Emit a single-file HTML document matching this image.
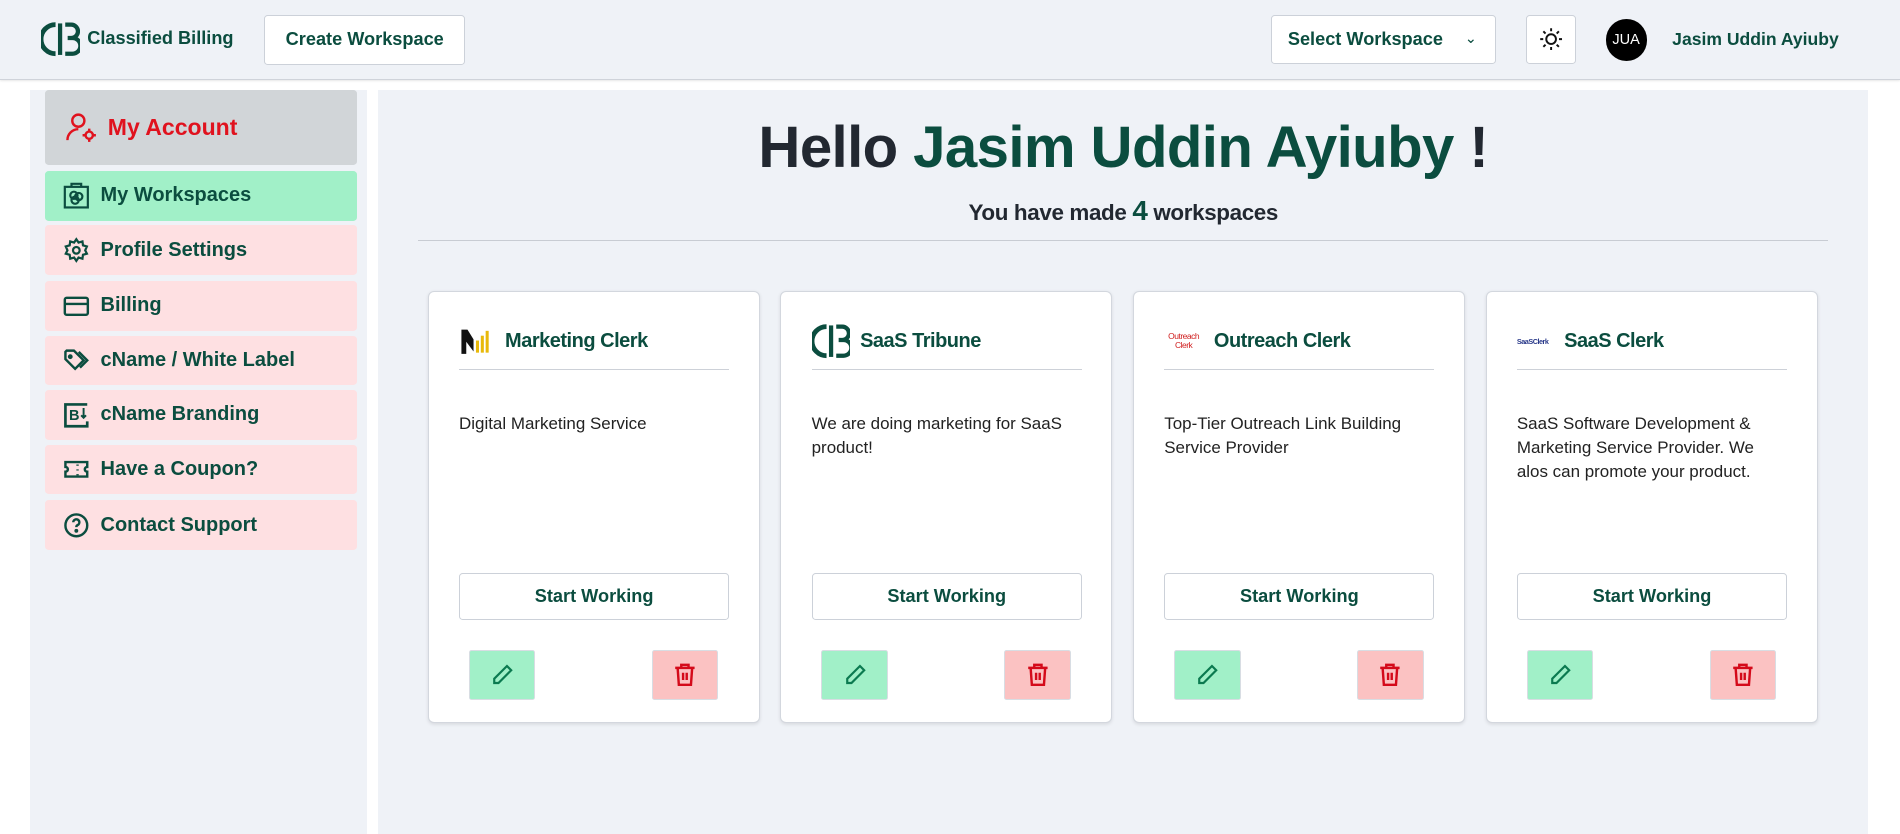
<!DOCTYPE html>
<html><head><meta charset="utf-8"><style>
*{box-sizing:border-box;margin:0;padding:0}
html,body{width:1900px;height:834px;overflow:hidden;background:#fff}
#root{zoom:1.21173;width:1568px;height:688px;position:relative;font-family:"Liberation Sans",Arial,sans-serif;color:#0b4d3f}
.abs{position:absolute}
.hdr{left:0;top:0;width:1568px;height:66px;background:#eff2f7;border-bottom:1px solid #cfd3da;box-shadow:0 1px 2px rgba(0,0,0,.12)}
.btn{background:#fff;border:1px solid #ccd1d9;border-radius:3px;font-weight:bold;display:flex;align-items:center;justify-content:center;color:#0b4d3f}
.side{left:25px;top:74px;width:278px;height:614px;background:#eff2f7}
.item{position:absolute;left:12px;width:258px;height:41px;border-radius:3px;background:#fee0e2;display:flex;align-items:center;padding-left:15px;font-weight:bold;font-size:16.5px;color:#0b4d3f}
.item svg{margin-right:9px}
.main{left:312px;top:74px;width:1230px;height:614px;background:#eff2f7}
.card{position:absolute;top:240px;width:274px;height:357px;background:#fff;border:1px solid #d3d7de;border-radius:5px;box-shadow:0 1px 3px rgba(0,0,0,.1)}
.card .t{position:absolute;left:25px;top:28px;height:26px;display:flex;align-items:center;font-weight:bold;font-size:16.5px;letter-spacing:-.4px}
.card .hr{position:absolute;left:25px;width:223px;top:64px;border-top:1px solid #cdd1d8}
.card .d{position:absolute;left:25px;top:99px;width:222px;font-size:14px;line-height:20px;color:#222}
.card .sw{position:absolute;left:25px;top:232px;width:223px;height:39px;font-size:15px}
.card .e,.card .x{position:absolute;top:296px;width:55px;height:41px;border-radius:2px;border:1px solid #d8dde3;display:flex;align-items:center;justify-content:center}
.card .e{left:33px;background:#a1f0c8}
.card .x{left:184px;background:#fbc2c2}
</style></head><body><div id="root">
<div class="abs hdr"></div>
<svg class="abs" style="left:34px;top:17px" width="32" height="30" viewBox="0 0 32 30"><path d="M12 3A12 12 0 0 0 12 27" fill="none" stroke="#0b4d3f" stroke-width="4"/><rect x="14" y="2" width="3.5" height="26" fill="#0b4d3f"/><path d="M20 3h5a5.5 5.5 0 0 1 0 11h-3M22 14h4a6.5 6.5 0 0 1 0 13h-6" fill="none" stroke="#0b4d3f" stroke-width="3.5"/></svg>
<div class="abs" style="left:72px;top:23px;font-weight:bold;font-size:15px">Classified Billing</div>
<div class="abs btn" style="left:218px;top:12px;width:166px;height:42px;font-size:15px">Create Workspace</div>
<div class="abs btn" style="left:1049px;top:12px;width:186px;height:41px;font-size:15px;justify-content:flex-start;padding-left:13px">Select Workspace<span style="margin-left:18px;font-weight:normal;font-size:12px;color:#0b4d3f">&#8964;</span></div>
<div class="abs btn" style="left:1259px;top:12px;width:42px;height:41px"><svg width="20" height="20" viewBox="0 0 20 20" stroke="#111" stroke-width="1.6" fill="none"><circle cx="10" cy="10" r="4"/><path d="M10 1v2.5M10 16.5V19M1 10h2.5M16.5 10H19M3.6 3.6l1.8 1.8M14.6 14.6l1.8 1.8M3.6 16.4l1.8-1.8M14.6 5.4l1.8-1.8"/></svg></div>
<div class="abs" style="left:1325px;top:16px;width:34px;height:34px;border-radius:50%;background:#000;color:#fff;font-size:12px;display:flex;align-items:center;justify-content:center">JUA</div>
<div class="abs" style="left:1380px;top:24px;font-weight:bold;font-size:14.5px">Jasim Uddin Ayiuby</div>

<div class="abs side">
<div class="item" style="top:0;height:62px;background:#d1d5d8;color:#e0121e;font-size:19px;padding-left:17px"><svg width="26" height="26" viewBox="0 0 26 26" fill="none" stroke="#e0121e" stroke-width="2"><circle cx="11" cy="8" r="5"/><path d="M2 24c0-5 4-9 9-9"/><circle cx="20" cy="20" r="3"/><path d="M20 14.5v2M20 23.5v2M14.5 20h2M23.5 20h2"/></svg>My Account</div>
<div class="item" style="top:67px;background:#a1f0c8"><svg width="22" height="22" viewBox="0 0 22 22" fill="none" stroke="#0b4d3f" stroke-width="1.8"><rect x="1.5" y="4" width="19" height="17"/><path d="M7 4V1.5h8V4"/><circle cx="9" cy="11" r="3"/><circle cx="13" cy="12" r="3"/><circle cx="10" cy="15" r="3"/></svg>My Workspaces</div>
<div class="item" style="top:112px"><svg width="22" height="22" viewBox="0 0 24 24" fill="none" stroke="#0b4d3f" stroke-width="2"><circle cx="12" cy="12" r="3"/><path d="M12 2l2 3 3.5-1 .5 3.5 3.5 1-1.5 3.5 1.5 3-3.5 1-.5 3.5-3.5-1-2 3-2-3-3.5 1-.5-3.5-3.5-1L4 12 2.5 8.5l3.5-1 .5-3.5 3.5 1z"/></svg>Profile Settings</div>
<div class="item" style="top:158px"><svg width="22" height="22" viewBox="0 0 22 22" fill="none" stroke="#0b4d3f" stroke-width="2"><rect x="1.5" y="4" width="19" height="14" rx="1.5"/><path d="M1.5 9h19"/></svg>Billing</div>
<div class="item" style="top:203px"><svg width="22" height="22" viewBox="0 0 22 22" fill="none" stroke="#0b4d3f" stroke-width="2"><path d="M2 4v6l8 8 7-7-8-8H3z"/><path d="M13 4l7 7-6 6"/><circle cx="6" cy="8" r="1"/></svg>cName / White Label</div>
<div class="item" style="top:248px"><svg width="22" height="22" viewBox="0 0 22 22" fill="none" stroke="#0b4d3f" stroke-width="2.2"><path d="M20 2H2v18h18v-4"/><text x="5" y="15" font-size="12" font-weight="bold" fill="#0b4d3f" stroke="none" font-family="Liberation Sans">B</text><path d="M17 5v8M15 11l2 2 2-2" stroke-width="1.6"/></svg>cName Branding</div>
<div class="item" style="top:293px"><svg width="22" height="22" viewBox="0 0 22 22" fill="none" stroke="#0b4d3f" stroke-width="2"><path d="M2 5h18v4a2 2 0 0 0 0 4v4H2v-4a2 2 0 0 0 0-4z"/><path d="M12 7v1M12 11v1M12 15v1"/></svg>Have a Coupon?</div>
<div class="item" style="top:339px"><svg width="22" height="22" viewBox="0 0 22 22" fill="none" stroke="#0b4d3f" stroke-width="2"><circle cx="11" cy="11" r="9"/><path d="M8.5 8.5a2.5 2.5 0 1 1 3.5 2.3c-.7.4-1 .9-1 1.7"/><circle cx="11" cy="15.5" r=".6" fill="#0b4d3f"/></svg>Contact Support</div>
</div>

<div class="abs main"></div>
<div class="abs" style="left:312px;width:1230px;top:94px;text-align:center;font-weight:bold;font-size:48px;color:#222831;letter-spacing:-.5px">Hello <span style="color:#0b4d3f">Jasim Uddin Ayiuby</span> !</div>
<div class="abs" style="left:312px;width:1230px;top:161px;text-align:center;font-size:18.5px;font-weight:bold;color:#222831;letter-spacing:-.3px">You have made <b style="color:#0b4d3f;font-size:23px">4</b> workspaces</div>
<div class="abs" style="left:345px;width:1164px;top:198px;border-top:1px solid #c8ccd3"></div>

<div class="card" style="left:353px"><div class="t"><svg width="26" height="26" viewBox="0 0 26 26" style="margin-right:12px"><path d="M2 3h5l5 8 0 10-6-8v10H2z" fill="#111"/><rect x="14" y="12" width="2.5" height="10" fill="#e8b90b"/><rect x="18" y="8" width="2.5" height="14" fill="#e8b90b"/><rect x="22" y="4" width="2.5" height="18" fill="#e8b90b"/></svg>Marketing Clerk</div><div class="hr"></div><div class="d">Digital Marketing Service</div><div class="btn sw">Start Working</div><div class="e"><svg width="20" height="20" viewBox="0 0 20 20" fill="none" stroke="#0b7a50" stroke-width="1.8"><path d="M14 2.5l3.5 3.5L7 16.5H3.5V13z"/></svg></div><div class="x"><svg width="18" height="20" viewBox="0 0 18 20" fill="none" stroke="#d40a1a" stroke-width="2"><path d="M1 4h16M6 4V1.5h6V4M3 4l1 14h10l1-14M7.5 8v6M10.5 8v6"/></svg></div></div>
<div class="card" style="left:644px"><div class="t"><svg width="32" height="30" viewBox="0 0 32 30" style="margin-right:8px"><path d="M12 3A12 12 0 0 0 12 27" fill="none" stroke="#0b4d3f" stroke-width="4"/><rect x="14" y="2" width="3.5" height="26" fill="#0b4d3f"/><path d="M20 3h5a5.5 5.5 0 0 1 0 11h-3M22 14h4a6.5 6.5 0 0 1 0 13h-6" fill="none" stroke="#0b4d3f" stroke-width="3.5"/></svg>SaaS Tribune</div><div class="hr"></div><div class="d">We are doing marketing for SaaS product!</div><div class="btn sw">Start Working</div><div class="e"><svg width="20" height="20" viewBox="0 0 20 20" fill="none" stroke="#0b7a50" stroke-width="1.8"><path d="M14 2.5l3.5 3.5L7 16.5H3.5V13z"/></svg></div><div class="x"><svg width="18" height="20" viewBox="0 0 18 20" fill="none" stroke="#d40a1a" stroke-width="2"><path d="M1 4h16M6 4V1.5h6V4M3 4l1 14h10l1-14M7.5 8v6M10.5 8v6"/></svg></div></div>
<div class="card" style="left:935px"><div class="t"><span style="display:inline-block;width:32px;margin-right:9px;font-size:7px;line-height:8px;color:#d02020;text-align:center;font-weight:normal">Outreach<br>Clerk</span>Outreach Clerk</div><div class="hr"></div><div class="d">Top-Tier Outreach Link Building Service Provider</div><div class="btn sw">Start Working</div><div class="e"><svg width="20" height="20" viewBox="0 0 20 20" fill="none" stroke="#0b7a50" stroke-width="1.8"><path d="M14 2.5l3.5 3.5L7 16.5H3.5V13z"/></svg></div><div class="x"><svg width="18" height="20" viewBox="0 0 18 20" fill="none" stroke="#d40a1a" stroke-width="2"><path d="M1 4h16M6 4V1.5h6V4M3 4l1 14h10l1-14M7.5 8v6M10.5 8v6"/></svg></div></div>
<div class="card" style="left:1226px"><div class="t"><span style="display:inline-block;width:30px;margin-right:9px;font-size:6px;color:#2a3a8a;font-weight:bold">SaaSClerk</span>SaaS Clerk</div><div class="hr"></div><div class="d">SaaS Software Development &amp; Marketing Service Provider. We alos can promote your product.</div><div class="btn sw">Start Working</div><div class="e"><svg width="20" height="20" viewBox="0 0 20 20" fill="none" stroke="#0b7a50" stroke-width="1.8"><path d="M14 2.5l3.5 3.5L7 16.5H3.5V13z"/></svg></div><div class="x"><svg width="18" height="20" viewBox="0 0 18 20" fill="none" stroke="#d40a1a" stroke-width="2"><path d="M1 4h16M6 4V1.5h6V4M3 4l1 14h10l1-14M7.5 8v6M10.5 8v6"/></svg></div></div>
</div></body></html>
